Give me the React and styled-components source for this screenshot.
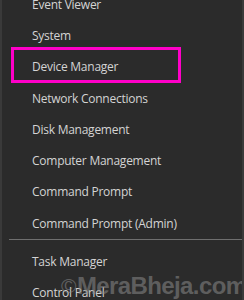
import styled, { createGlobalStyle } from "styled-components";

const GlobalStyle = createGlobalStyle`
  html, body {
    margin: 0;
    padding: 0;
    background: #2b2b2b;
  }
`;

const Screen = styled.div`
  position: relative;
  box-sizing: border-box;
  width: 244px;
  height: 300px;
  overflow: hidden;
  background: #2b2b2b;
  border-left: 2px solid #3a3a3a;
  border-right: 2px solid #3a3a3a;
  font-family: "Open Sans", "Noto Sans", sans-serif;
`;

const Menu = styled.ul`
  list-style: none;
  margin: -11.5px 0 0;
  padding: 0;
`;

const Item = styled.li`
  position: relative;
  display: flex;
  align-items: center;
  height: 31.3px;
  padding-left: 30px;
  color: #d4d4d4;
  font-size: 12px;
  letter-spacing: -0.25px;
  white-space: nowrap;
`;

const Separator = styled.li`
  height: 1px;
  margin: 0 0 6px 7px;
  background: #6f6f6f;
`;

// pink annotation box drawn over the screenshot
const Highlight = styled.span`
  position: absolute;
  left: 9px;
  top: -4px;
  width: 170px;
  height: 36px;
  box-sizing: border-box;
  border: 3px solid #ff00c8;
`;

const Watermark = styled.div`
  position: absolute;
  left: 59px;
  bottom: 0;
  display: flex;
  align-items: center;
  gap: 1px;
  font-family: "Liberation Sans", Arial, sans-serif;
  font-weight: bold;
  font-size: 24px;
  letter-spacing: -0.6px;
  color: rgba(140, 140, 140, 0.55);
  white-space: nowrap;
`;

const Copy = styled.span`
  font-size: 21px;
  font-weight: normal;
`;

const items = [
  "Event Viewer",
  "System",
  "Device Manager",
  "Network Connections",
  "Disk Management",
  "Computer Management",
  "Command Prompt",
  "Command Prompt (Admin)",
];

const lower = ["Task Manager", "Control Panel"];

export default function App() {
  return (
    <>
      <GlobalStyle />
      <Screen>
        <Menu>
          {items.map((label) => (
            <Item key={label}>
              {label}
              {label === "Device Manager" && <Highlight />}
            </Item>
          ))}
          <Separator />
          {lower.map((label) => (
            <Item key={label}>{label}</Item>
          ))}
        </Menu>
        <Watermark>
          <Copy>©</Copy>
          MeraBheja.com
        </Watermark>
      </Screen>
    </>
  );
}
